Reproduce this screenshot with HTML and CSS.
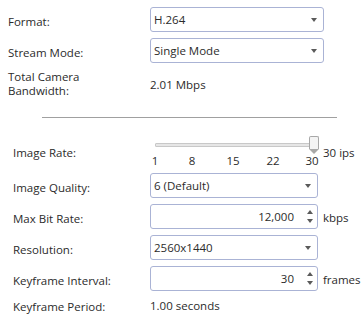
FILE: index.html
```html
<!DOCTYPE html>
<html>
<head>
<meta charset="utf-8">
<link rel="stylesheet" href="styles.css">
</head>
<body>
<div class="page">
  <div class="sec top">
    <div class="row">
      <div class="label">Format:</div>
      <div class="select wide"><span class="txt">H.264</span><span class="caret"></span></div>
    </div>
    <div class="row">
      <div class="label">Stream Mode:</div>
      <div class="select wide"><span class="txt">Single Mode</span><span class="caret"></span></div>
    </div>
    <div class="row bw">
      <div class="label two">Total Camera<br>Bandwidth:</div>
      <div class="value">2.01 Mbps</div>
    </div>
  </div>
  <div class="sep"></div>
  <div class="sec bottom">
    <div class="row rate">
      <div class="label">Image Rate:</div>
      <div class="slider">
        <div class="track"><div class="thumb"></div></div>
        <div class="ticks">
          <span class="t1">1</span><span class="t2">8</span><span class="t3">15</span><span class="t4">22</span><span class="t5">30</span>
        </div>
      </div>
      <div class="unit ips">30 ips</div>
    </div>
    <div class="row">
      <div class="label">Image Quality:</div>
      <div class="select"><span class="txt">6 (Default)</span><span class="caret"></span></div>
    </div>
    <div class="row">
      <div class="label">Max Bit Rate:</div>
      <div class="spin"><span class="num">12,000</span><span class="arrows"><span class="up"></span><span class="down"></span></span></div>
      <div class="unit">kbps</div>
    </div>
    <div class="row">
      <div class="label">Resolution:</div>
      <div class="select"><span class="txt">2560x1440</span><span class="caret"></span></div>
    </div>
    <div class="row">
      <div class="label">Keyframe Interval:</div>
      <div class="spin"><span class="num">30</span><span class="arrows"><span class="up"></span><span class="down"></span></span></div>
      <div class="unit">frames</div>
    </div>
    <div class="row period">
      <div class="label">Keyframe Period:</div>
      <div class="value">1.00 seconds</div>
    </div>
  </div>
</div>
</body>
</html>
```
FILE: styles.css
```css
html, body {
  margin: 0;
  padding: 0;
  background: #ffffff;
}
body {
  font-family: "Open Sans", "Noto Sans", sans-serif;
  font-size: 11.5px;
  color: #2b2b2b;
  width: 362px;
  height: 319px;
  overflow: hidden;
}
.page {
  display: flex;
  flex-direction: column;
  padding-top: 7px;
}
.sec {
  display: flex;
  flex-direction: column;
}
.top {
  padding-left: 8px;
  gap: 6px;
}
.top .label {
  width: 142px;
}
.bottom {
  padding-left: 13px;
  gap: 6px;
  margin-top: 18px;
}
.bottom .label {
  width: 137px;
}
.row {
  display: flex;
  align-items: center;
  height: 25px;
}
.label {
  flex: none;
  padding-top: 3px;
}
.label.two {
  line-height: 14px;
  padding-top: 0;
}
.bw {
  height: 28px;
  margin-top: 1px;
}
.value {
  padding-top: 1px;
}
.select, .spin {
  box-sizing: border-box;
  height: 25px;
  width: 168px;
  border: 1px solid #aab3d5;
  border-radius: 3px;
  display: flex;
  align-items: center;
  padding: 0 6px 0 3px;
  background: #fff;
}
.select.wide {
  width: 174px;
}
.txt {
  flex: 1;
}
.caret {
  width: 0;
  height: 0;
  border-left: 3px solid transparent;
  border-right: 3px solid transparent;
  border-top: 4px solid #5a5a5a;
}
.spin {
  padding-right: 4px;
}
.num {
  flex: 1;
  text-align: right;
  padding-right: 12px;
}
.arrows {
  display: flex;
  flex-direction: column;
  gap: 5px;
  width: 7px;
  align-items: center;
}
.up {
  width: 0;
  height: 0;
  border-left: 3px solid transparent;
  border-right: 3px solid transparent;
  border-bottom: 4px solid #5a5a5a;
}
.down {
  width: 0;
  height: 0;
  border-left: 3px solid transparent;
  border-right: 3px solid transparent;
  border-top: 4px solid #5a5a5a;
}
.unit {
  margin-left: 5px;
  padding-top: 1px;
}
.sep {
  height: 1px;
  background: #a0a0a0;
  margin: 19px 25px 0 42px;
}
.rate {
  height: 31px;
  align-items: flex-start;
}
.rate .label {
  padding-top: 9px;
}
.slider {
  width: 168px;
  position: relative;
  height: 31px;
  flex: none;
}
.track {
  position: absolute;
  left: 5px;
  width: 157px;
  top: 7px;
  height: 2px;
  background: #e6e6e6;
  border: 1px solid #c8c8c8;
  border-radius: 1px;
}
.thumb {
  position: absolute;
  left: 153px;
  top: -8px;
  width: 8px;
  height: 12px;
  background: #f4f4f4;
  border: 1px solid #a8a8a8;
  border-bottom: none;
  border-radius: 2px 2px 0 0;
}
.thumb::after {
  content: "";
  position: absolute;
  left: -1px;
  top: 12px;
  width: 0;
  height: 0;
  border-left: 5px solid transparent;
  border-right: 5px solid transparent;
  border-top: 5px solid #a8a8a8;
}
.ticks {
  position: absolute;
  top: 17px;
  left: 0;
  width: 168px;
  height: 16px;
}
.ticks span {
  position: absolute;
  transform: translateX(-50%);
}
.t1 { left: 5px; }
.t2 { left: 42px; }
.t3 { left: 83px; }
.t4 { left: 123px; }
.t5 { left: 162px; }
.ips {
  padding-top: 9px;
}
.period {
  height: 20px;
  margin-top: -2px;
}
```
